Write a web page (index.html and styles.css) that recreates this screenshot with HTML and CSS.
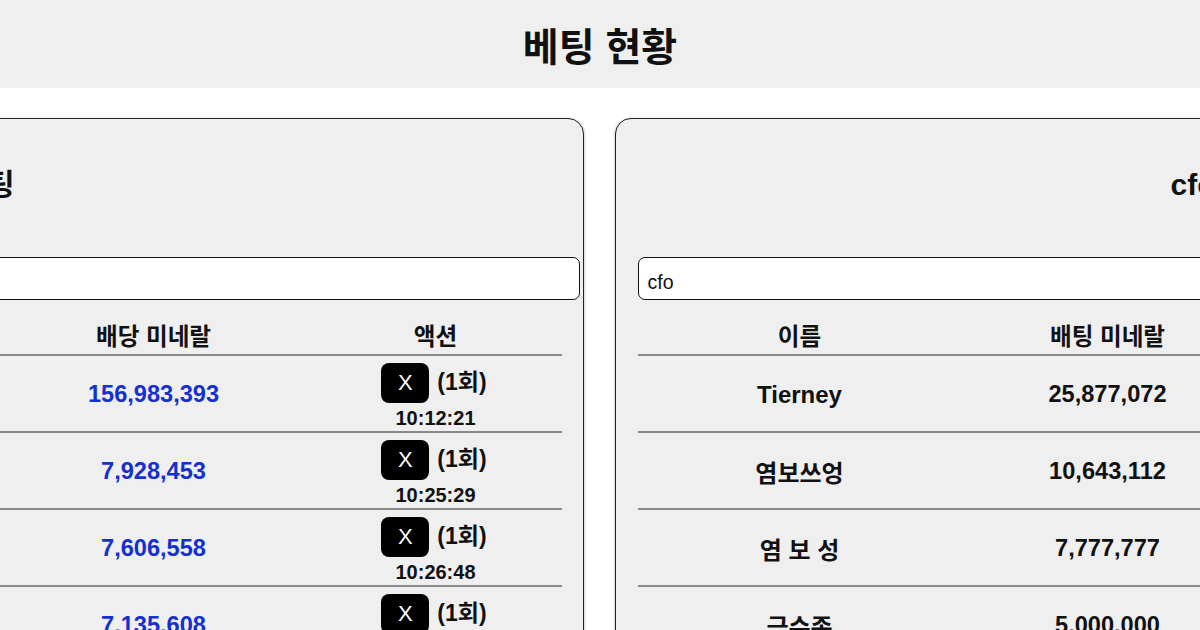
FILE: index.html
```html
<!DOCTYPE html>
<html lang="ko">
<head>
<meta charset="utf-8">
<title>베팅 현황</title>
<link rel="stylesheet" href="styles.css">
</head>
<body>
<header class="top">
  <h1 class="title">베팅 현황</h1>
</header>
<main class="boards">
  <section class="panel">
    <h2 class="panel-title">실시간 베팅</h2>
    <input class="search" type="text" value="">
    <table class="grid grid-live">
      <colgroup>
        <col class="c-rank"><col class="c-name"><col class="c-bet"><col class="c-payout"><col class="c-action">
      </colgroup>
      <thead>
        <tr><th>순위</th><th>이름</th><th>배팅 미네랄</th><th>배당 미네랄</th><th>액션</th></tr>
      </thead>
      <tbody>
        <tr>
          <td>1</td><td class="txt">Tierney</td><td class="num">25,877,072</td><td class="num blue">156,983,393</td>
          <td class="act"><div class="act-line"><button class="xbtn">X</button><span class="cnt">(1회)</span></div><div class="time">10:12:21</div></td>
        </tr>
        <tr>
          <td>2</td><td class="txt">염보쓰엉</td><td class="num">10,643,112</td><td class="num blue">7,928,453</td>
          <td class="act"><div class="act-line"><button class="xbtn">X</button><span class="cnt">(1회)</span></div><div class="time">10:25:29</div></td>
        </tr>
        <tr>
          <td>3</td><td class="txt">염 보 성</td><td class="num">7,777,777</td><td class="num blue">7,606,558</td>
          <td class="act"><div class="act-line"><button class="xbtn">X</button><span class="cnt">(1회)</span></div><div class="time">10:26:48</div></td>
        </tr>
        <tr>
          <td>4</td><td class="txt">극수존</td><td class="num">5,000,000</td><td class="num blue">7,135,608</td>
          <td class="act"><div class="act-line"><button class="xbtn">X</button><span class="cnt">(1회)</span></div><div class="time">10:27:02</div></td>
        </tr>
      </tbody>
    </table>
  </section>
  <section class="panel">
    <h2 class="panel-title">cfo 베팅 현황</h2>
    <input class="search" type="text" value="cfo">
    <table class="grid grid-user">
      <colgroup>
        <col class="u-name"><col class="u-bet"><col class="u-payout"><col class="u-time">
      </colgroup>
      <thead>
        <tr><th>이름</th><th>배팅 미네랄</th><th>배당 미네랄</th><th>시간</th></tr>
      </thead>
      <tbody>
        <tr><td class="txt">Tierney</td><td class="num">25,877,072</td><td class="num blue">156,983,393</td><td class="time-cell">10:12:21</td></tr>
        <tr><td class="txt">염보쓰엉</td><td class="num">10,643,112</td><td class="num blue">7,928,453</td><td class="time-cell">10:25:29</td></tr>
        <tr><td class="txt">염 보 성</td><td class="num">7,777,777</td><td class="num blue">7,606,558</td><td class="time-cell">10:26:48</td></tr>
        <tr><td class="txt">극수존</td><td class="num">5,000,000</td><td class="num blue">7,135,608</td><td class="time-cell">10:27:02</td></tr>
      </tbody>
    </table>
  </section>
</main>
</body>
</html>
```

FILE: styles.css
```css
* { box-sizing: border-box; }

html, body {
  margin: 0;
  padding: 0;
  background: #ffffff;
  overflow: hidden;
}

body {
  font-family: "Liberation Sans", "Noto Sans CJK KR", Arial, sans-serif;
  color: #111;
}

.top {
  background: #efefef;
  height: 88px;
  display: flex;
  align-items: center;
  justify-content: center;
}

.title {
  margin: 0;
  font-size: 39px;
  font-weight: 700;
  line-height: 46px;
  padding-top: 8px;
}

.boards {
  display: flex;
  justify-content: center;
  gap: 31px;
  padding: 30px 2px 0 0;
}

.panel {
  flex: 0 0 1284px;
  width: 1284px;
  background: #efefef;
  border: 1px solid #222;
  border-radius: 16px;
  box-shadow: 0 1px 3px rgba(0, 0, 0, 0.35);
  padding: 0 22px 20px;
}

.panel-title {
  margin: 48px 0 0;
  font-size: 30px;
  font-weight: 700;
  line-height: 36px;
  text-align: center;
}

.search {
  display: block;
  width: 100%;
  box-sizing: content-box;
  height: 34px;
  margin-top: 54px;
  padding: 7px 8px 0 9px;
  border: 1px solid #111;
  border-radius: 7px;
  background: #fff;
  font-family: "Liberation Sans", Arial, sans-serif;
  font-size: 19.5px;
  color: #111;
  line-height: 34px;
}

.grid {
  width: 100%;
  border-collapse: collapse;
  margin-top: 15px;
  table-layout: fixed;
}

.c-rank { width: 300px; }
.c-name { width: 200px; }
.c-bet { width: 175px; }
.c-payout { width: 312px; }
.c-action { width: 252px; }

.u-name { width: 324px; }
.u-bet { width: 292px; }
.u-payout { width: 312px; }
.u-time { width: 310px; }

.grid th {
  font-size: 23.6px;
  font-weight: 700;
  height: 40px;
  padding: 5px 0 0;
  line-height: 30px;
  vertical-align: middle;
  text-align: center;
  border-bottom: 2px solid #8a8a8a;
}

.grid td {
  height: 77px;
  padding: 2px 0 0;
  text-align: center;
  vertical-align: middle;
  font-weight: 700;
  font-size: 24px;
  border-bottom: 2px solid #8a8a8a;
}

.grid .num {
  font-size: 23.6px;
}

.grid .blue {
  color: #1530d0;
}

.grid .act {
  vertical-align: top;
  padding-top: 7px;
}

.act-line {
  display: flex;
  align-items: center;
  justify-content: center;
  gap: 8px;
  padding-right: 3px;
}

.xbtn {
  width: 48px;
  height: 40px;
  border: none;
  border-radius: 8px;
  background: #000;
  color: #fff;
  font-family: "Liberation Sans", Arial, sans-serif;
  font-size: 22px;
  font-weight: 400;
  padding: 0;
}

.cnt {
  font-size: 23px;
  font-weight: 700;
  position: relative;
  top: -3px;
}

.time {
  font-size: 20px;
  font-weight: 700;
  line-height: 22px;
  margin-top: 4px;
}

.time-cell {
  font-size: 20px;
}
```
